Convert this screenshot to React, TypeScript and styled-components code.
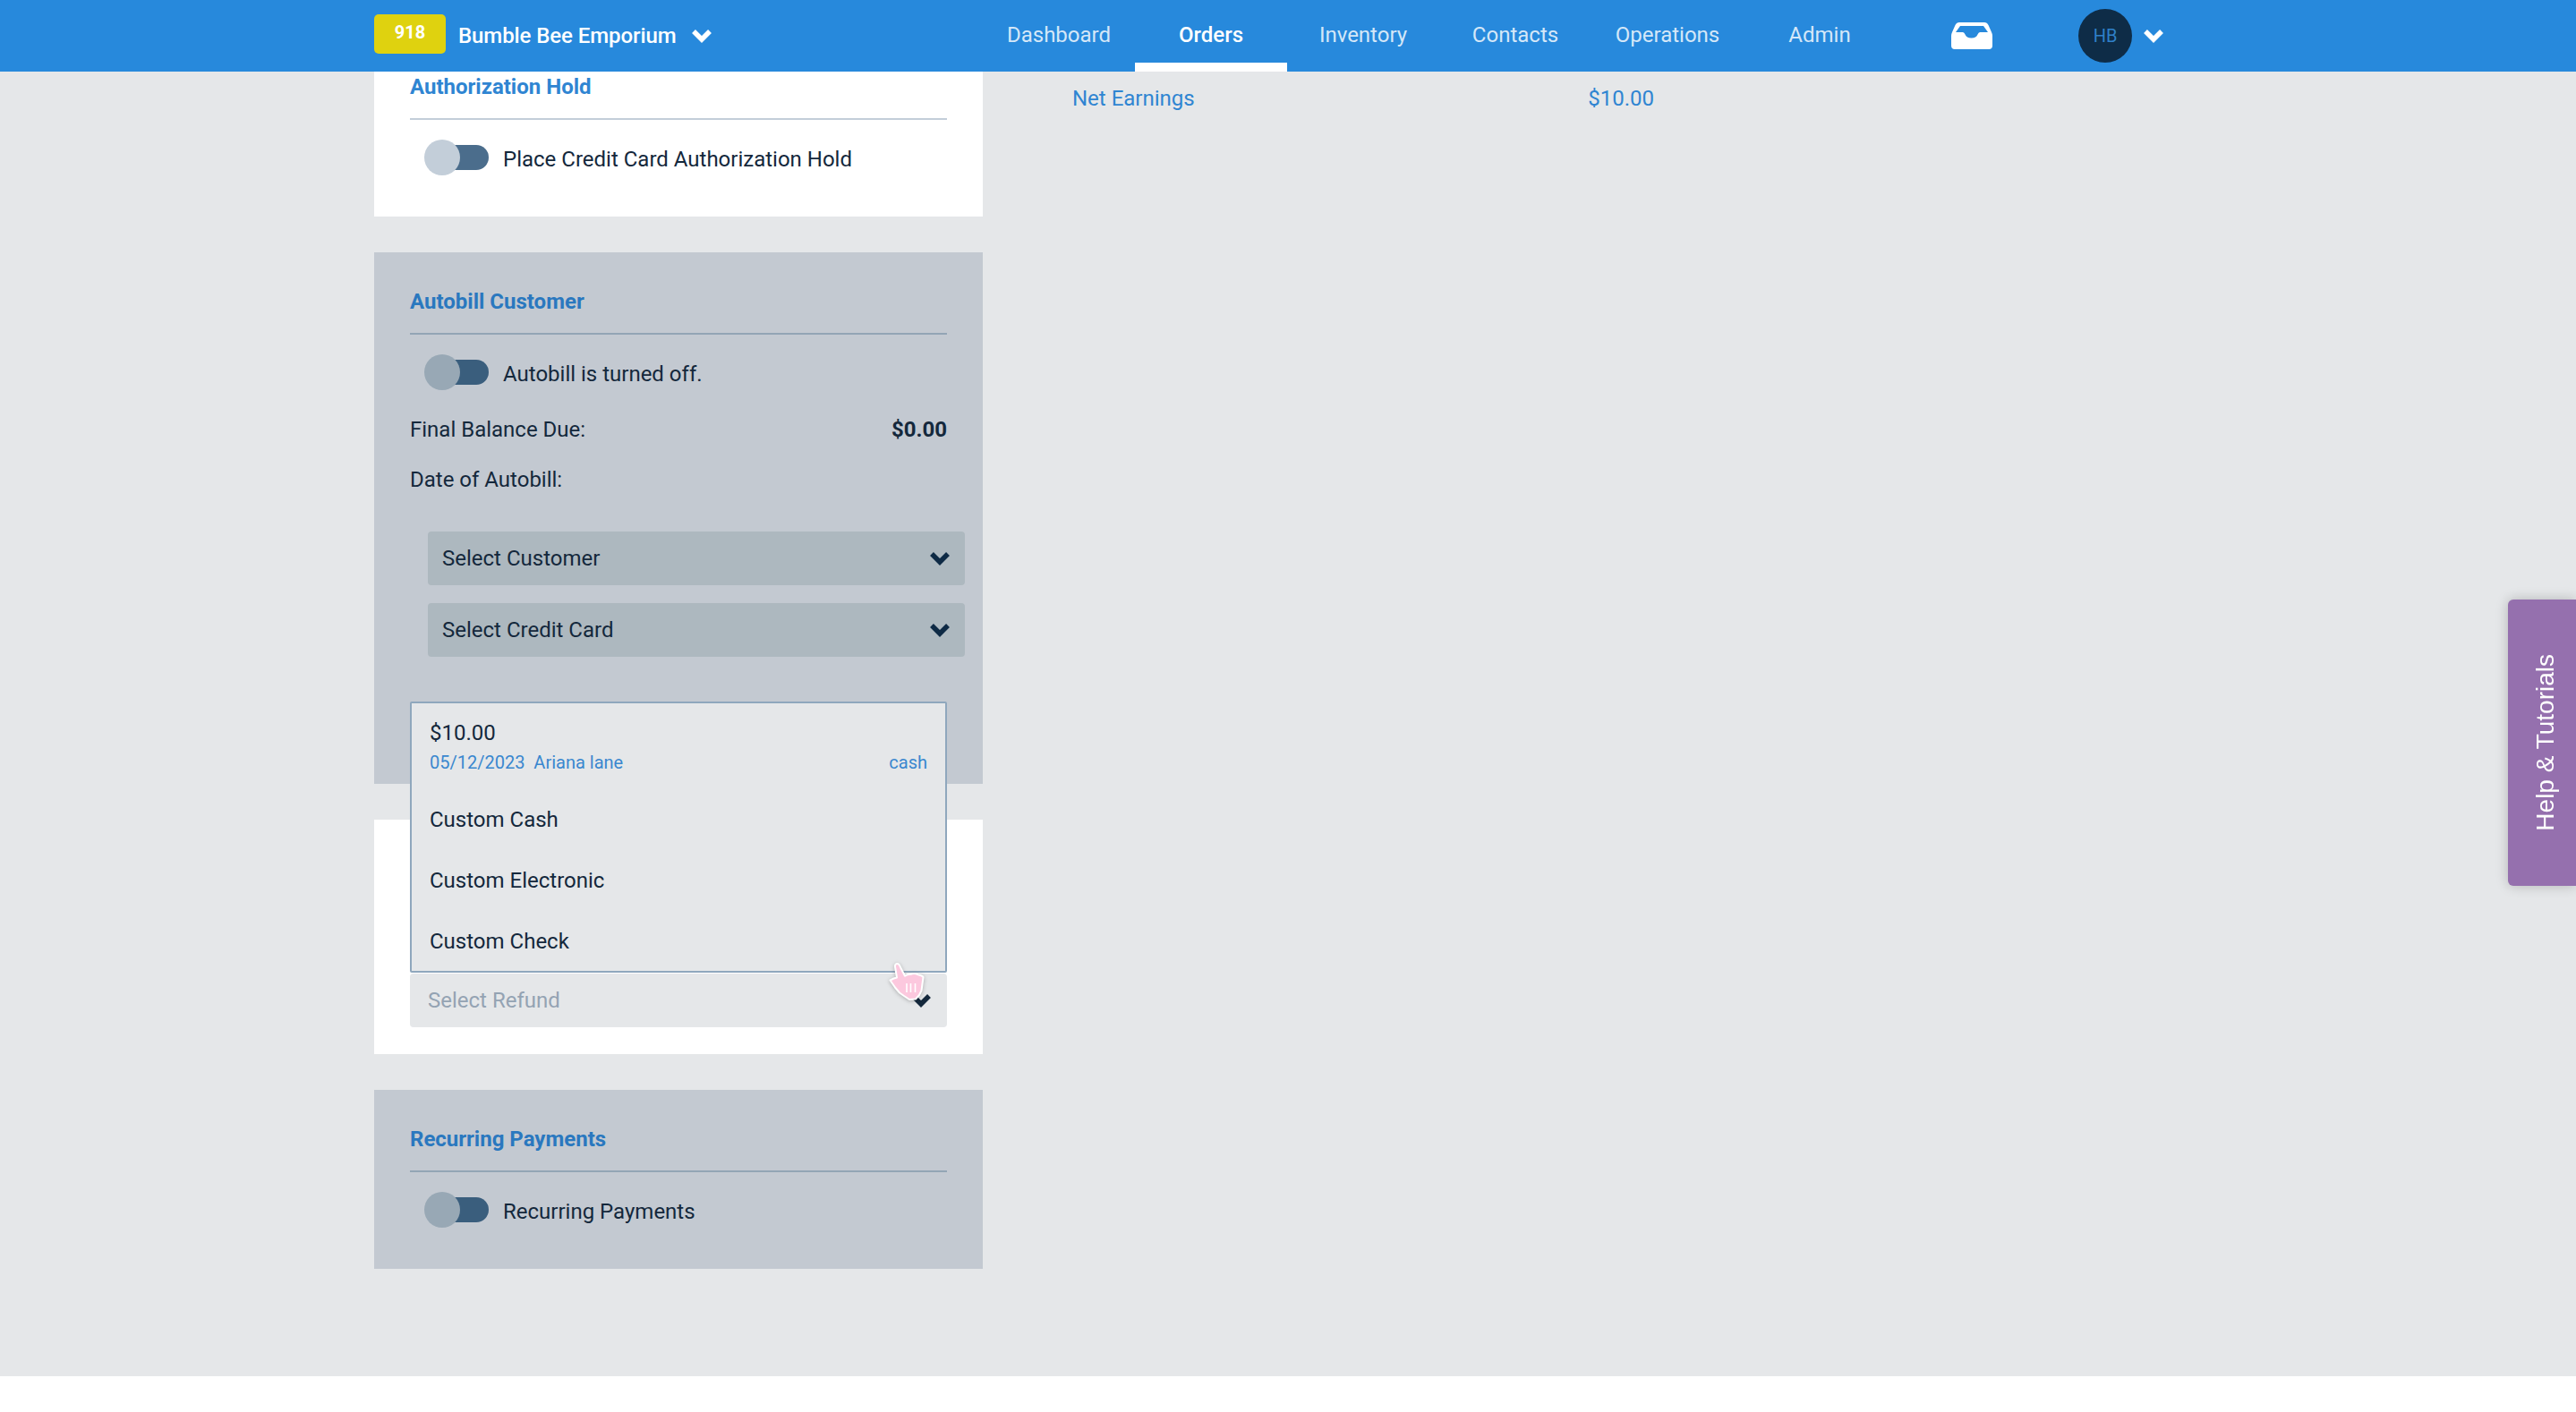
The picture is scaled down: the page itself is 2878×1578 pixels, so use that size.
import React from "react";
import styled, { createGlobalStyle } from "styled-components";

const Global = createGlobalStyle`
  html, body { margin: 0; padding: 0; height: 100%; background: #e5e7e9; }
  #root { height: 100%; }
  * { box-sizing: border-box; }
`;

const Page = styled.div`
  position: relative;
  width: 2878px;
  height: 1578px;
  overflow: hidden;
  display: flex;
  flex-direction: column;
  background: #e5e7e9;
  font-family: Roboto, "Noto Sans", sans-serif;
  font-size: 24px;
  color: #14283c;
`;

const Header = styled.header`
  flex: none;
  height: 80px;
  display: flex;
  align-items: center;
  padding-left: 418px;
  background: #2789dc;
  color: #fff;
`;

const Brand = styled.div`
  width: 680px;
  display: flex;
  align-items: center;
`;

const StoreBadge = styled.div`
  width: 80px;
  height: 44px;
  margin-top: -4px;
  padding-bottom: 4px;
  display: flex;
  align-items: center;
  justify-content: center;
  border-radius: 5px;
  background: #dfd20f;
  font-size: 20px;
  font-weight: 700;
`;

const StoreName = styled.div`
  margin: 0 16px 0 14px;
  font-size: 24px;
  font-weight: 500;
  letter-spacing: -0.08px;
  white-space: nowrap;
`;

const Nav = styled.nav`
  display: grid;
  grid-template-columns: repeat(6, 170px);
  height: 80px;
`;

const NavItem = styled.a<{ $active?: boolean }>`
  display: flex;
  align-items: center;
  justify-content: center;
  padding-top: ${(p) => (p.$active ? "8px" : "0")};
  padding-bottom: ${(p) => (p.$active ? "0" : "2px")};
  border-bottom: ${(p) => (p.$active ? "10px solid #fff" : "0")};
  font-size: 24px;
  font-weight: ${(p) => (p.$active ? 500 : 400)};
  color: ${(p) => (p.$active ? "#fff" : "#d4e7f8")};
`;

const InboxSlot = styled.div`
  display: flex;
  margin: 0 96px 0 62px;
`;

const Avatar = styled.div`
  width: 60px;
  height: 60px;
  margin-right: 12px;
  border-radius: 50%;
  display: flex;
  align-items: center;
  justify-content: center;
  background: #0e2c47;
  color: #2f80c8;
  font-size: 20px;
`;

const Main = styled.main`
  flex: 1;
  min-height: 0;
  display: flex;
  padding-left: 418px;
`;

const LeftColumn = styled.div`
  width: 680px;
  display: flex;
  flex-direction: column;
  gap: 40px;
`;

const SummaryRow = styled.div`
  width: 650px;
  height: 34px;
  margin: 13px 0 0 100px;
  display: flex;
  align-items: center;
  justify-content: space-between;
  color: #2f85d2;
  font-size: 24px;
`;

const Card = styled.section<{ $grey?: boolean; $clipped?: boolean; $open?: boolean }>`
  width: 680px;
  display: flex;
  flex-direction: column;
  padding: ${(p) => (p.$clipped ? "0" : "36px")} 40px ${(p) => (p.$open ? "0" : "46px")};
  background: ${(p) => (p.$grey ? "#c3c9d1" : "#fff")};
`;

const CardTitle = styled.h3<{ $grey?: boolean; $clipped?: boolean }>`
  margin: ${(p) => (p.$clipped ? "-2px" : "0")} 0 0;
  padding: 2px 0 18px;
  border-bottom: 2px solid ${(p) => (p.$grey ? "#93a5b5" : "#c3ced9")};
  font-size: 24px;
  line-height: 34px;
  font-weight: 700;
  color: ${(p) => (p.$grey ? "#2a78bf" : "#2f85d2")};
`;

const ToggleRow = styled.div`
  display: flex;
  align-items: center;
  margin: 22px 0 0 16px;
`;

const Toggle = styled.div`
  position: relative;
  width: 72px;
  height: 40px;
  margin-right: 16px;
  flex: none;
`;

const ToggleTrack = styled.div<{ $grey?: boolean }>`
  position: absolute;
  left: 16px;
  right: 0;
  top: 6px;
  height: 28px;
  border-radius: 14px;
  background: ${(p) => (p.$grey ? "#3a5e7d" : "#4b6d8c")};
`;

const ToggleThumb = styled.div<{ $grey?: boolean }>`
  position: absolute;
  left: 0;
  top: 0;
  width: 40px;
  height: 40px;
  border-radius: 50%;
  background: ${(p) => (p.$grey ? "#98a8b5" : "#c3ced9")};
`;

const ToggleLabel = styled.span`
  font-size: 24px;
  padding-top: 4px;
  white-space: nowrap;
`;

const InfoRow = styled.div<{ $first?: boolean }>`
  height: 34px;
  margin-top: ${(p) => (p.$first ? "26px" : "22px")};
  padding-top: 1px;
  display: flex;
  align-items: center;
  justify-content: space-between;
  font-size: 24px;
`;

const Amount = styled.strong`
  font-weight: 700;
`;

const SelectStack = styled.div`
  display: flex;
  flex-direction: column;
  gap: 20px;
  margin: 42px 0 142px 20px;
`;

const SelectBox = styled.div`
  flex: none;
  width: 600px;
  height: 60px;
  display: flex;
  align-items: center;
  justify-content: space-between;
  padding: 0 16px;
  border-radius: 4px;
  background: #adb8bf;
  color: #14283c;
  font-size: 24px;
`;

const RefundCard = styled.section`
  position: relative;
  width: 680px;
  height: 262px;
  display: flex;
  flex-direction: column;
  justify-content: flex-end;
  padding: 0 40px 30px;
  background: #fff;
`;

const RefundField = styled.div`
  position: relative;
  height: 60px;
  display: flex;
  align-items: center;
  justify-content: space-between;
  padding: 0 17px 0 20px;
  border-radius: 4px;
  background: #e5e7e9;
  color: #94a3b3;
  font-size: 24px;
`;

const Menu = styled.ul`
  position: absolute;
  left: 0;
  right: 0;
  bottom: calc(100% + 1px);
  margin: 0;
  padding: 0;
  list-style: none;
  border: 2px solid #8fa7bd;
  border-radius: 2px;
  background: #e5e7e9;
  color: #14283c;
`;

const MenuItem = styled.li`
  height: 68px;
  display: flex;
  align-items: center;
  padding: 2px 20px 0;
  font-size: 24px;
`;

const PaymentItem = styled.li`
  height: 95px;
  padding: 17px 20px 0;
`;

const PaymentAmount = styled.div`
  font-size: 24px;
  line-height: 32px;
`;

const PaymentMeta = styled.div`
  margin-top: 2px;
  display: flex;
  justify-content: space-between;
  font-size: 20px;
  line-height: 30px;
  color: #3a87cf;
  white-space: pre;
`;

const CursorSlot = styled.div`
  position: absolute;
  left: 534px;
  top: -13px;
  width: 42px;
  height: 46px;
  display: flex;
  filter: drop-shadow(0 1px 2px rgba(0, 0, 0, 0.25));
`;

const HelpTab = styled.aside`
  position: absolute;
  top: 670px;
  right: 0;
  width: 76px;
  height: 320px;
  display: flex;
  align-items: center;
  justify-content: center;
  padding-left: 8px;
  border-radius: 6px 0 0 6px;
  background: #9570ae;
  box-shadow: 0 0 14px rgba(0, 0, 0, 0.22);
  color: #fff;
  font-family: "Liberation Sans", Arial, sans-serif;
  font-size: 28px;
`;

const HelpText = styled.span`
  writing-mode: vertical-rl;
  transform: rotate(180deg);
  white-space: nowrap;
`;

const Footer = styled.footer`
  flex: none;
  height: 40px;
  background: #fff;
`;

const ChevronSvg = styled.svg`
  flex: none;
`;

const Chevron = ({ color = "#fff" }: { color?: string }) => (
  <ChevronSvg width="24" height="16" viewBox="0 0 24 16">
    <polyline points="3,3 12,12 21,3" fill="none" stroke={color} strokeWidth="5.5" />
  </ChevronSvg>
);

const InboxIcon = () => (
  <svg width="46" height="30" viewBox="0 0 46 30">
    <path
      d="M9 0H37Q40 0 41.5 3L45 11Q46 13 46 15V26Q46 30 42 30H4Q0 30 0 26V15Q0 13 1 11L4.5 3Q6 0 9 0Z"
      fill="#fff"
    />
    <path
      d="M10 4H36L41 11H32Q30.5 11 29.5 13.5Q28 17.5 22.5 17.5Q17 17.5 15.5 13.5Q14.5 11 13 11H5Z"
      fill="#2789dc"
    />
  </svg>
);

const HandCursor = () => (
  <svg width="42" height="46" viewBox="0 0 42 46">
    <path
      d="M10 2C8 2.3 7.6 4.4 8.2 6.5L10 17.5L6.5 18.5L2.5 20.5L8 28.5L13 34.5L18 38L24 42L31 41.5L35 37L37.5 32L39.5 17C38 14.8 35.5 14.5 33.5 14.2C31 12.9 28 12.8 25.5 13.8C23 13.6 20.8 14.3 19 15.7L14 6C13.2 3.4 11.8 1.8 10 2Z"
      fill="#fcc8de"
      stroke="#fff"
      strokeWidth="2"
      strokeLinejoin="round"
    />
    <path d="M21 24V34M25.5 24V34M30.5 24V34" stroke="#fff" strokeWidth="1.6" fill="none" />
  </svg>
);

const SwitchRow = ({ label, grey }: { label: string; grey?: boolean }) => (
  <ToggleRow>
    <Toggle>
      <ToggleTrack $grey={grey} />
      <ToggleThumb $grey={grey} />
    </Toggle>
    <ToggleLabel>{label}</ToggleLabel>
  </ToggleRow>
);

const NAV = ["Dashboard", "Orders", "Inventory", "Contacts", "Operations", "Admin"];

export default function App() {
  return (
    <Page>
      <Global />
      <Header>
        <Brand>
          <StoreBadge>918</StoreBadge>
          <StoreName>Bumble Bee Emporium</StoreName>
          <Chevron />
        </Brand>
        <Nav>
          {NAV.map((n) => (
            <NavItem key={n} $active={n === "Orders"}>
              {n}
            </NavItem>
          ))}
        </Nav>
        <InboxSlot>
          <InboxIcon />
        </InboxSlot>
        <Avatar>HB</Avatar>
        <Chevron />
      </Header>
      <Main>
        <LeftColumn>
          <Card $clipped>
            <CardTitle $clipped>Authorization Hold</CardTitle>
            <SwitchRow label="Place Credit Card Authorization Hold" />
          </Card>
          <Card $grey $open>
            <CardTitle $grey>Autobill Customer</CardTitle>
            <SwitchRow grey label="Autobill is turned off." />
            <InfoRow $first>
              <span>Final Balance Due:</span>
              <Amount>$0.00</Amount>
            </InfoRow>
            <InfoRow>
              <span>Date of Autobill:</span>
            </InfoRow>
            <SelectStack>
              <SelectBox>
                Select Customer
                <Chevron color="#0e2a45" />
              </SelectBox>
              <SelectBox>
                Select Credit Card
                <Chevron color="#0e2a45" />
              </SelectBox>
            </SelectStack>
          </Card>
          <RefundCard>
            <RefundField>
              Select Refund
              <Chevron color="#14283c" />
              <Menu>
                <PaymentItem>
                  <PaymentAmount>$10.00</PaymentAmount>
                  <PaymentMeta>
                    <span>05/12/2023  Ariana lane</span>
                    <span>cash</span>
                  </PaymentMeta>
                </PaymentItem>
                <MenuItem>Custom Cash</MenuItem>
                <MenuItem>Custom Electronic</MenuItem>
                <MenuItem>Custom Check</MenuItem>
              </Menu>
              <CursorSlot>
                <HandCursor />
              </CursorSlot>
            </RefundField>
          </RefundCard>
          <Card $grey>
            <CardTitle $grey>Recurring Payments</CardTitle>
            <SwitchRow grey label="Recurring Payments" />
          </Card>
        </LeftColumn>
        <SummaryRow>
          <span>Net Earnings</span>
          <span>$10.00</span>
        </SummaryRow>
      </Main>
      <Footer />
      <HelpTab>
        <HelpText>Help &amp; Tutorials</HelpText>
      </HelpTab>
    </Page>
  );
}
